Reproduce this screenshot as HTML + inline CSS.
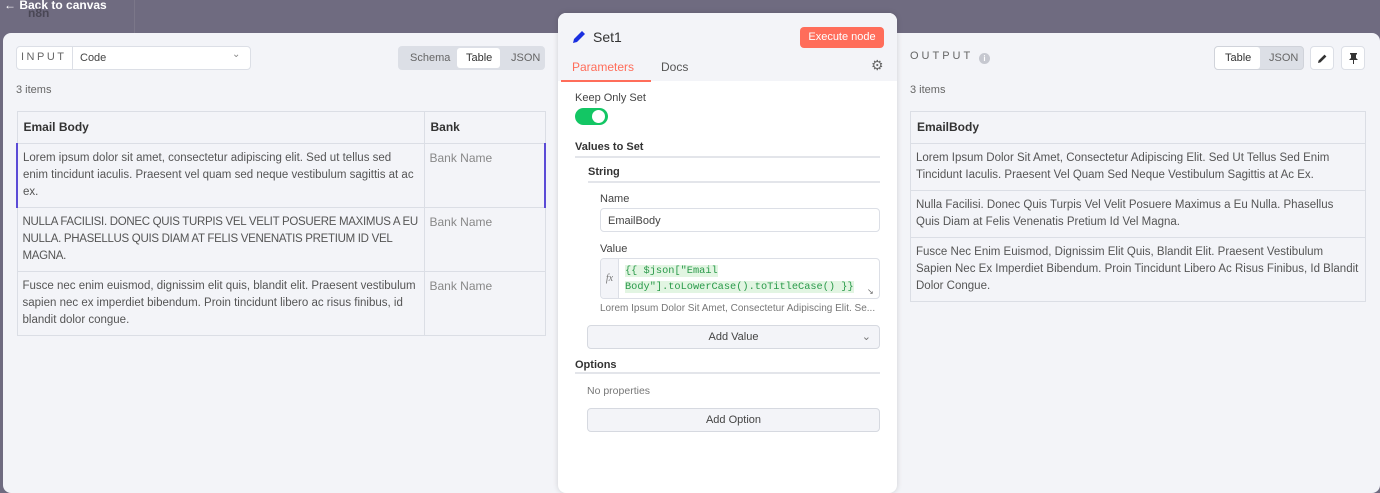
<!DOCTYPE html>
<html><head><meta charset="utf-8"><style>
*{box-sizing:border-box;margin:0;padding:0}
body{width:1380px;height:480px;overflow:hidden;background:#6f6b80;font-family:"Liberation Sans",sans-serif;font-size:12px;color:#555;position:relative}
.a{position:absolute}
.main{left:3px;top:33px;width:1377px;height:460px;background:#f3f4f8;border-radius:8px}
table{border-collapse:collapse;position:absolute;font-size:12px;table-layout:fixed}
td,th{border:1px solid #dbdee5;padding:6px 5px;vertical-align:top;line-height:17px;text-align:left}
th{font-weight:bold;color:#333;font-size:12px;height:31px;padding:7px 6px;vertical-align:middle}
.btn{border:1px solid #d6d9e0;border-radius:4px;background:#f3f4f8;text-align:center;color:#444}
.lbl{color:#444;font-size:11px}
.hd{font-weight:bold;color:#333;font-size:11px}
.line{height:2px;background:#e3e5ea}
</style></head><body>
<div class="a" style="left:4px;top:-2px;color:#fff;font-weight:bold;font-size:12px">&#8592; Back to canvas</div>
<div class="a" style="left:28px;top:6px;color:#4a4755;font-weight:bold;font-size:12px">n8n</div>
<div class="a" style="left:134px;top:0;width:1px;height:33px;background:#7b7789"></div>
<div class="a main"></div>

<!-- INPUT -->
<div class="a" style="left:16px;top:46px;width:235px;height:24px;background:#fff;border:1px solid #dcdfe6;border-radius:4px"></div>
<div class="a" style="left:72px;top:46px;width:1px;height:24px;background:#dcdfe6"></div>
<div class="a" style="left:21px;top:51px;letter-spacing:2.5px;color:#666;font-size:11px">INPUT</div>
<div class="a" style="left:80px;top:52px;color:#444;font-size:11px">Code</div>
<div class="a" style="left:232px;top:49px;color:#888;font-size:10px">&#8964;</div>
<div class="a" style="left:398px;top:46px;width:147px;height:24px;background:#dcdfe6;border-radius:4px"></div>
<div class="a" style="left:457px;top:48px;width:43px;height:20px;background:#fff;border-radius:3px"></div>
<div class="a" style="left:410px;top:52px;font-size:11px;color:#666">Schema</div>
<div class="a" style="left:466px;top:52px;font-size:11px;color:#333">Table</div>
<div class="a" style="left:511px;top:52px;font-size:11px;color:#666">JSON</div>
<div class="a" style="left:16px;top:84px;font-size:11px;color:#666">3 items</div>
<table style="left:16px;top:111px;width:530px">
<tr><th style="width:407px">Email Body</th><th>Bank</th></tr>
<tr><td style="border-left:2px solid #5b4bd6;height:63px;font-size:11.5px">Lorem ipsum dolor sit amet, consectetur adipiscing elit. Sed ut tellus sed enim tincidunt iaculis. Praesent vel quam sed neque vestibulum sagittis at ac ex.</td><td style="border-right:2px solid #5b4bd6;color:#888">Bank Name</td></tr>
<tr><td style="height:64px;font-size:11.5px;letter-spacing:-0.3px">NULLA FACILISI. DONEC QUIS TURPIS VEL VELIT POSUERE MAXIMUS A EU NULLA. PHASELLUS QUIS DIAM AT FELIS VENENATIS PRETIUM ID VEL MAGNA.</td><td style="color:#888">Bank Name</td></tr>
<tr><td style="height:64px;font-size:11.5px">Fusce nec enim euismod, dignissim elit quis, blandit elit. Praesent vestibulum sapien nec ex imperdiet bibendum. Proin tincidunt libero ac risus finibus, id blandit dolor congue.</td><td style="color:#888">Bank Name</td></tr>
</table>

<!-- OUTPUT -->
<div class="a" style="left:910px;top:50px;letter-spacing:3px;color:#666;font-size:11px">OUTPUT</div>
<div class="a" style="left:979px;top:53px;width:11px;height:11px;border-radius:50%;background:#c6c8d0;color:#fff;font-size:8px;text-align:center;line-height:11px;font-weight:bold">i</div>
<div class="a" style="left:1214px;top:46px;width:90px;height:24px;background:#dcdfe6;border-radius:4px;border:1px solid #d0d3da"></div>
<div class="a" style="left:1215px;top:47px;width:45px;height:22px;background:#fff;border-radius:3px"></div>
<div class="a" style="left:1225px;top:52px;font-size:11px;color:#333">Table</div>
<div class="a" style="left:1269px;top:52px;font-size:11px;color:#666">JSON</div>
<div class="a" style="left:1310px;top:46px;width:24px;height:24px;background:#fff;border:1px solid #dcdfe6;border-radius:4px"><svg class="a" style="left:6px;top:6px" width="11" height="11" viewBox="0 0 11 11"><path d="M1 10 L1.6 7.5 L7.5 1.6 L9.4 3.5 L3.5 9.4 Z" fill="#333"/></svg></div>
<div class="a" style="left:1341px;top:46px;width:24px;height:24px;background:#fff;border:1px solid #dcdfe6;border-radius:4px"><svg class="a" style="left:6px;top:5px" width="11" height="12" viewBox="0 0 11 12"><path d="M2 1 H9 V2.5 H8 V6 L10 8 H1 L3 6 V2.5 H2 Z M5 8 H6 V12 H5 Z" fill="#333"/></svg></div>
<div class="a" style="left:910px;top:84px;font-size:11px;color:#666">3 items</div>
<table style="left:910px;top:111px;width:456px">
<tr><th>EmailBody</th></tr>
<tr><td style="height:47px;font-size:11.5px">Lorem Ipsum Dolor Sit Amet, Consectetur Adipiscing Elit. Sed Ut Tellus Sed Enim Tincidunt Iaculis. Praesent Vel Quam Sed Neque Vestibulum Sagittis at Ac Ex.</td></tr>
<tr><td style="height:47px;font-size:11.5px">Nulla Facilisi. Donec Quis Turpis Vel Velit Posuere Maximus a Eu Nulla. Phasellus Quis Diam at Felis Venenatis Pretium Id Vel Magna.</td></tr>
<tr><td style="height:64px;font-size:11.5px">Fusce Nec Enim Euismod, Dignissim Elit Quis, Blandit Elit. Praesent Vestibulum Sapien Nec Ex Imperdiet Bibendum. Proin Tincidunt Libero Ac Risus Finibus, Id Blandit Dolor Congue.</td></tr>
</table>

<!-- NODE -->
<div class="a" style="left:558px;top:13px;width:339px;height:480px;background:#fff;border-radius:8px;box-shadow:0 0 6px rgba(0,0,0,.15);overflow:hidden">
 <div class="a" style="left:0;top:0;width:339px;height:68px;background:#f3f4f8"></div>
 <svg class="a" style="left:13px;top:16px" width="16" height="16" viewBox="0 0 16 16"><path d="M2 14 L3 10 L11 2 L14 5 L6 13 Z" fill="#1a2fe0"/></svg>
 <div class="a" style="left:35px;top:16px;font-size:14px;color:#333">Set1</div>
 <div class="a" style="left:242px;top:14px;width:84px;height:21px;background:#ff6d5a;border-radius:4px;color:#fff;font-size:11px;line-height:21px;text-align:center">Execute node</div>
 <div class="a" style="left:14px;top:47px;font-size:12px;color:#ff6d5a">Parameters</div>
 <div class="a" style="left:3px;top:67px;width:90px;height:2px;background:#ff6d5a"></div>
 <div class="a" style="left:103px;top:47px;font-size:12px;color:#555">Docs</div>
 <div class="a" style="left:313px;top:44px;font-size:14px;color:#666">&#9881;</div>
 <div class="a lbl" style="left:17px;top:79px">Keep Only Set</div>
 <div class="a" style="left:17px;top:95px;width:33px;height:17px;border-radius:9px;background:#13c664"></div>
 <div class="a" style="left:34px;top:97px;width:13px;height:13px;border-radius:50%;background:#fff"></div>
 <div class="a hd" style="left:17px;top:128px">Values to Set</div>
 <div class="a line" style="left:17px;top:143px;width:305px"></div>
 <div class="a hd" style="left:30px;top:153px">String</div>
 <div class="a line" style="left:30px;top:168px;width:292px"></div>
 <div class="a lbl" style="left:42px;top:180px">Name</div>
 <div class="a" style="left:42px;top:195px;width:280px;height:24px;border:1px solid #dcdfe6;border-radius:4px;padding:6px 7px;font-size:11px;color:#444">EmailBody</div>
 <div class="a lbl" style="left:42px;top:230px">Value</div>
 <div class="a" style="left:42px;top:245px;width:280px;height:41px;border:1px solid #dcdfe6;border-radius:4px;overflow:hidden">
  <div class="a" style="left:0;top:0;width:18px;height:41px;background:#f3f4f8;border-right:1px solid #dcdfe6;font-family:'Liberation Serif',serif;font-style:italic;font-size:10px;color:#777;text-align:center;line-height:39px">fx</div>
  <div class="a" style="left:24px;top:4px;font-family:'Liberation Mono',monospace;font-size:10.3px;line-height:16px;color:#2a9a4a;white-space:nowrap"><span style="background:#e2f5e2">{{ $json["Email </span><br><span style="background:#e2f5e2">Body"].toLowerCase().toTitleCase() }}</span></div>
  <div class="a" style="left:266px;top:28px;font-size:8px;color:#666">&#8600;</div>
 </div>
 <div class="a" style="left:42px;top:290px;font-size:10px;color:#777;white-space:nowrap">Lorem Ipsum Dolor Sit Amet, Consectetur Adipiscing Elit. Se...</div>
 <div class="a btn" style="left:29px;top:312px;width:293px;height:24px;line-height:22px;font-size:11px">Add Value<span style="position:absolute;right:8px;color:#777">&#8964;</span></div>
 <div class="a hd" style="left:17px;top:346px">Options</div>
 <div class="a line" style="left:17px;top:359px;width:305px"></div>
 <div class="a" style="left:29px;top:372px;font-size:10.5px;color:#777">No properties</div>
 <div class="a btn" style="left:29px;top:395px;width:293px;height:24px;line-height:22px;font-size:11px">Add Option</div>
</div>
</body></html>
